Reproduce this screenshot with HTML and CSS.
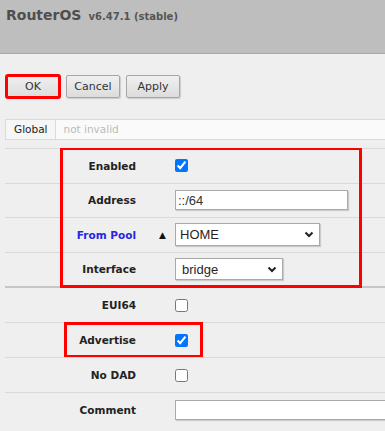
FILE: index.html
```html
<!DOCTYPE html>
<html lang="en">
<head>
    <meta charset="UTF-8">
    <title>RouterOS</title>
    <link rel="stylesheet" href="styles.css">
</head>
<body>
    <div class="header">
        <span class="brand">RouterOS</span>
        <span class="version">v6.47.1 (stable)</span>
    </div>

    <div class="toolbar">
        <button class="btn btn-ok">OK</button>
        <button class="btn">Cancel</button>
        <button class="btn">Apply</button>
    </div>

    <div class="tabs">
        <div class="tab active">Global</div>
        <div class="tab status">not invalid</div>
    </div>

    <div class="form">
        <div class="highlight big"></div>

        <div class="row half">
            <div class="label">Enabled</div>
            <div class="mark"></div>
            <input type="checkbox" class="check" checked>
        </div>
        <div class="row half">
            <div class="label">Address</div>
            <div class="mark"></div>
            <input type="text" class="text address" value="::/64">
        </div>
        <div class="row half">
            <div class="label link">From Pool</div>
            <div class="mark">&#9650;</div>
            <div class="select pool">
                <span>HOME</span>
                <svg width="10" height="7" viewBox="0 0 10 7"><path d="M1.5 1.5 L5 5 L8.5 1.5" fill="none" stroke="#222" stroke-width="2"/></svg>
            </div>
        </div>
        <div class="row half">
            <div class="label">Interface</div>
            <div class="mark"></div>
            <div class="select iface">
                <span>bridge</span>
                <svg width="10" height="7" viewBox="0 0 10 7"><path d="M1.5 1.5 L5 5 L8.5 1.5" fill="none" stroke="#222" stroke-width="2"/></svg>
            </div>
        </div>

        <div class="row section">
            <div class="label">EUI64</div>
            <div class="mark"></div>
            <input type="checkbox" class="check">
        </div>
        <div class="row">
            <div class="highlight small"></div>
            <div class="label">Advertise</div>
            <div class="mark"></div>
            <input type="checkbox" class="check" checked>
        </div>
        <div class="row">
            <div class="label">No DAD</div>
            <div class="mark"></div>
            <input type="checkbox" class="check">
        </div>
        <div class="row">
            <div class="label">Comment</div>
            <div class="mark"></div>
            <input type="text" class="text comment" value="">
        </div>
    </div>
</body>
</html>
```

FILE: styles.css
```css
body { margin: 0; background: #efefef; font-family: "DejaVu Sans", Verdana, sans-serif; color: #222; overflow: hidden; }

.header { height: 54px; background: #bebebe; border-bottom: 1px solid #a8a8a8; padding: 5px 0 0 6px; box-sizing: border-box; white-space: nowrap; }
.brand { font-size: 14px; font-weight: bold; color: #4e4e4e; }
.version { font-size: 10px; font-weight: bold; color: #555; margin-left: 2px; }

.toolbar { display: flex; gap: 6px; padding: 21px 0 21px 6px; }
.btn { width: 54px; height: 23px; padding: 0; font-family: "DejaVu Sans", Verdana, sans-serif; font-size: 11px; color: #333;
       background: linear-gradient(#f0f0f0, #dcdcdc); border: 1px solid #a6a6a6; border-radius: 2px;
       box-shadow: 1px 1px 1px rgba(0,0,0,0.15); }
.btn-ok { outline: 3px solid #ff0000; outline-offset: -2px; }

.tabs { display: flex; margin-left: 5px; height: 21px; box-sizing: border-box; border-top: 1px solid #dadada; border-bottom: 1px solid #dadada; background: #fafafa; font-size: 10.5px; }
.tab { padding: 0 7px 0 8px; line-height: 19px; }
.tab.active { background: #f6f6f6; border-left: 1px solid #dadada; border-right: 1px solid #dadada; color: #222; }
.tab.status { color: #bbb; }

.form { position: relative; margin: 8px 0 0 5px; overflow: hidden; }
.row { position: relative; display: flex; align-items: center; height: 35px; box-sizing: border-box; border-top: 1px solid #d9d9d9; }
.row.half { height: 34.5px; }
.row.section { height: 36px; border-top: 2px solid #c6c6c6; }

.label { flex: none; width: 131px; text-align: right; font-size: 10.5px; font-weight: bold; color: #222; }
.label.link { color: #2626e0; }
.mark { flex: none; width: 30px; padding-right: 9px; text-align: right; font-size: 9px; color: #111; }

.check { flex: none; margin: 0; width: 13px; height: 13px; }

.text { flex: none; margin: 0; height: 20px; box-sizing: border-box; padding: 0 2px; border: 1px solid #a9a9a9; background: #fff;
        font-family: "Liberation Sans", Arial, sans-serif; font-size: 13px; color: #333; box-shadow: 1px 1px 1px rgba(0,0,0,0.15); }
.address { width: 173px; }
.comment { width: 230px; }

.select { flex: none; display: flex; align-items: center; justify-content: space-between; box-sizing: border-box; height: 22px; padding: 0 5px 0 4px;
          border: 1px solid #a9a9a9; background: #fff; font-family: "Liberation Sans", Arial, sans-serif; font-size: 13px; color: #2a1f1f;
          box-shadow: 1px 1px 1px rgba(0,0,0,0.15); }
.pool { width: 145px; height: 23px; }
.iface { width: 108px; padding-left: 6px; }

.highlight { position: absolute; border: 3px solid #ff0000; box-sizing: border-box; pointer-events: none; }
.highlight.big { left: 55px; top: -1px; width: 302px; height: 141px; z-index: 2; }
.highlight.small { left: 59px; top: -1px; width: 139px; height: 36px; }
```
